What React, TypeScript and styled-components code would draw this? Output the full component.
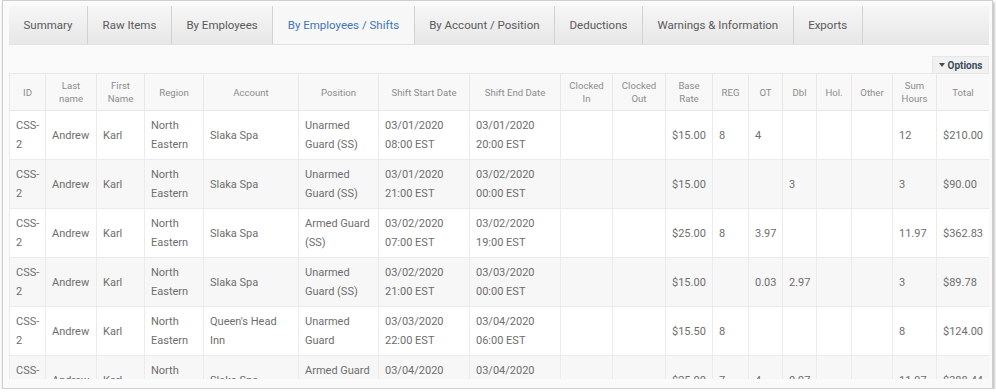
import React from "react";
import styled, { createGlobalStyle } from "styled-components";

const GlobalStyle = createGlobalStyle`
  html, body { margin: 0; padding: 0; background: #ffffff; }
  body { font-family: Roboto, "Liberation Sans", Arial, sans-serif; }
  * { box-sizing: border-box; }
`;

const Frame = styled.div`
  width: 991px;
  height: 389px;
  margin-left: 2px;
  border: 1px solid #cfcfcf;
  box-shadow: 1px 2px 3px rgba(0, 0, 0, 0.35);
  background: #fafafa;
  padding: 5px 3px 0 6px;
  display: flex;
  flex-direction: column;
`;

const TabBar = styled.div`
  display: flex;
  height: 39px;
  background: linear-gradient(#f6f6f6, #e7e7e7);
  border-bottom: 1px solid #e2e2e2;
`;

const Tab = styled.div<{ $active?: boolean }>`
  display: flex;
  align-items: center;
  padding: 0 14.5px;
  font-size: 11.5px;
  color: ${(p) => (p.$active ? "#4076b6" : "#5a5a5a")};
  background: ${(p) => (p.$active ? "#f7f7f7" : "transparent")};
  border-right: 1px solid #d2d2d2;
  white-space: nowrap;
`;

const OptionsRow = styled.div`
  display: flex;
  justify-content: flex-end;
  margin-top: 11px;
`;

const OptionsButton = styled.div`
  height: 17px;
  width: 57px;
  display: flex;
  align-items: center;
  justify-content: center;
  gap: 3px;
  font-size: 10px;
  font-weight: 700;
  color: #3d4c5c;
  background: #f1f1f1;
  border: 1px solid #e6e6e6;
  border-bottom: none;
`;

const Caret = styled.span`
  width: 0;
  height: 0;
  border-left: 3.5px solid transparent;
  border-right: 3.5px solid transparent;
  border-top: 4px solid #3d4c5c;
`;

const TableClip = styled.div`
  height: 306px;
  width: 980px;
  overflow: hidden;
  background: #f5f5f5;
`;

const Table = styled.table`
  table-layout: fixed;
  width: 980px;
  border-collapse: collapse;
  border: 1px solid #e8e8e8;
`;

const Th = styled.th`
  height: 37px;
  padding: 0 3px;
  font-size: 9.6px;
  line-height: 13px;
  font-weight: 400;
  color: #8c8c8c;
  text-align: center;
  vertical-align: middle;
  background: #f8f8f8;
  border: 1px solid #e8e8e8;
`;

const Tr = styled.tr<{ $alt?: boolean }>`
  background: ${(p) => (p.$alt ? "#f7f7f7" : "#ffffff")};
`;

const Td = styled.td`
  height: 49px;
  padding: 0 5px 0 6px;
  font-size: 11px;
  line-height: 19px;
  color: #6e6e6e;
  text-align: left;
  vertical-align: middle;
  border: 1px solid #ebebeb;
`;

const tabs = [
  "Summary",
  "Raw Items",
  "By Employees",
  "By Employees / Shifts",
  "By Account / Position",
  "Deductions",
  "Warnings & Information",
  "Exports",
];

const columns: { label: React.ReactNode; width: number }[] = [
  { label: "ID", width: 36 },
  { label: <>Last<br />name</>, width: 51 },
  { label: <>First<br />Name</>, width: 48 },
  { label: "Region", width: 59 },
  { label: "Account", width: 95 },
  { label: "Position", width: 80 },
  { label: "Shift Start Date", width: 91 },
  { label: "Shift End Date", width: 91 },
  { label: <>Clocked<br />In</>, width: 52 },
  { label: <>Clocked<br />Out</>, width: 53 },
  { label: <>Base<br />Rate</>, width: 47 },
  { label: "REG", width: 36 },
  { label: "OT", width: 34 },
  { label: "Dbl", width: 34 },
  { label: "Hol.", width: 35 },
  { label: "Other", width: 41 },
  { label: <>Sum<br />Hours</>, width: 44 },
  { label: "Total", width: 53 },
];

type Row = string[];

const rows: Row[] = [
  ["CSS-2", "Andrew", "Karl", "North Eastern", "Slaka Spa", "Unarmed Guard (SS)", "03/01/2020 08:00 EST", "03/01/2020 20:00 EST", "", "", "$15.00", "8", "4", "", "", "", "12", "$210.00"],
  ["CSS-2", "Andrew", "Karl", "North Eastern", "Slaka Spa", "Unarmed Guard (SS)", "03/01/2020 21:00 EST", "03/02/2020 00:00 EST", "", "", "$15.00", "", "", "3", "", "", "3", "$90.00"],
  ["CSS-2", "Andrew", "Karl", "North Eastern", "Slaka Spa", "Armed Guard (SS)", "03/02/2020 07:00 EST", "03/02/2020 19:00 EST", "", "", "$25.00", "8", "3.97", "", "", "", "11.97", "$362.83"],
  ["CSS-2", "Andrew", "Karl", "North Eastern", "Slaka Spa", "Unarmed Guard (SS)", "03/02/2020 21:00 EST", "03/03/2020 00:00 EST", "", "", "$15.00", "", "0.03", "2.97", "", "", "3", "$89.78"],
  ["CSS-2", "Andrew", "Karl", "North Eastern", "Queen's Head Inn", "Unarmed Guard", "03/03/2020 22:00 EST", "03/04/2020 06:00 EST", "", "", "$15.50", "8", "", "", "", "", "8", "$124.00"],
  ["CSS-2", "Andrew", "Karl", "North Eastern", "Slaka Spa", "Armed Guard (SS)", "03/04/2020 07:00 EST", "03/04/2020 19:00 EST", "", "", "$25.00", "7", "4", "0.97", "", "", "11.97", "$388.44"],
];

export default function App() {
  return (
    <>
      <GlobalStyle />
      <Frame>
        <TabBar>
          {tabs.map((t) => (
            <Tab key={t} $active={t === "By Employees / Shifts"}>
              {t}
            </Tab>
          ))}
        </TabBar>
        <OptionsRow>
          <OptionsButton>
            <Caret />
            Options
          </OptionsButton>
        </OptionsRow>
        <TableClip>
          <Table>
            <colgroup>
              {columns.map((c, i) => (
                <col key={i} style={{ width: c.width }} />
              ))}
            </colgroup>
            <thead>
              <tr>
                {columns.map((c, i) => (
                  <Th key={i}>{c.label}</Th>
                ))}
              </tr>
            </thead>
            <tbody>
              {rows.map((r, ri) => (
                <Tr key={ri} $alt={ri % 2 === 1}>
                  {r.map((v, ci) => (
                    <Td key={ci}>{v}</Td>
                  ))}
                </Tr>
              ))}
            </tbody>
          </Table>
        </TableClip>
      </Frame>
    </>
  );
}
